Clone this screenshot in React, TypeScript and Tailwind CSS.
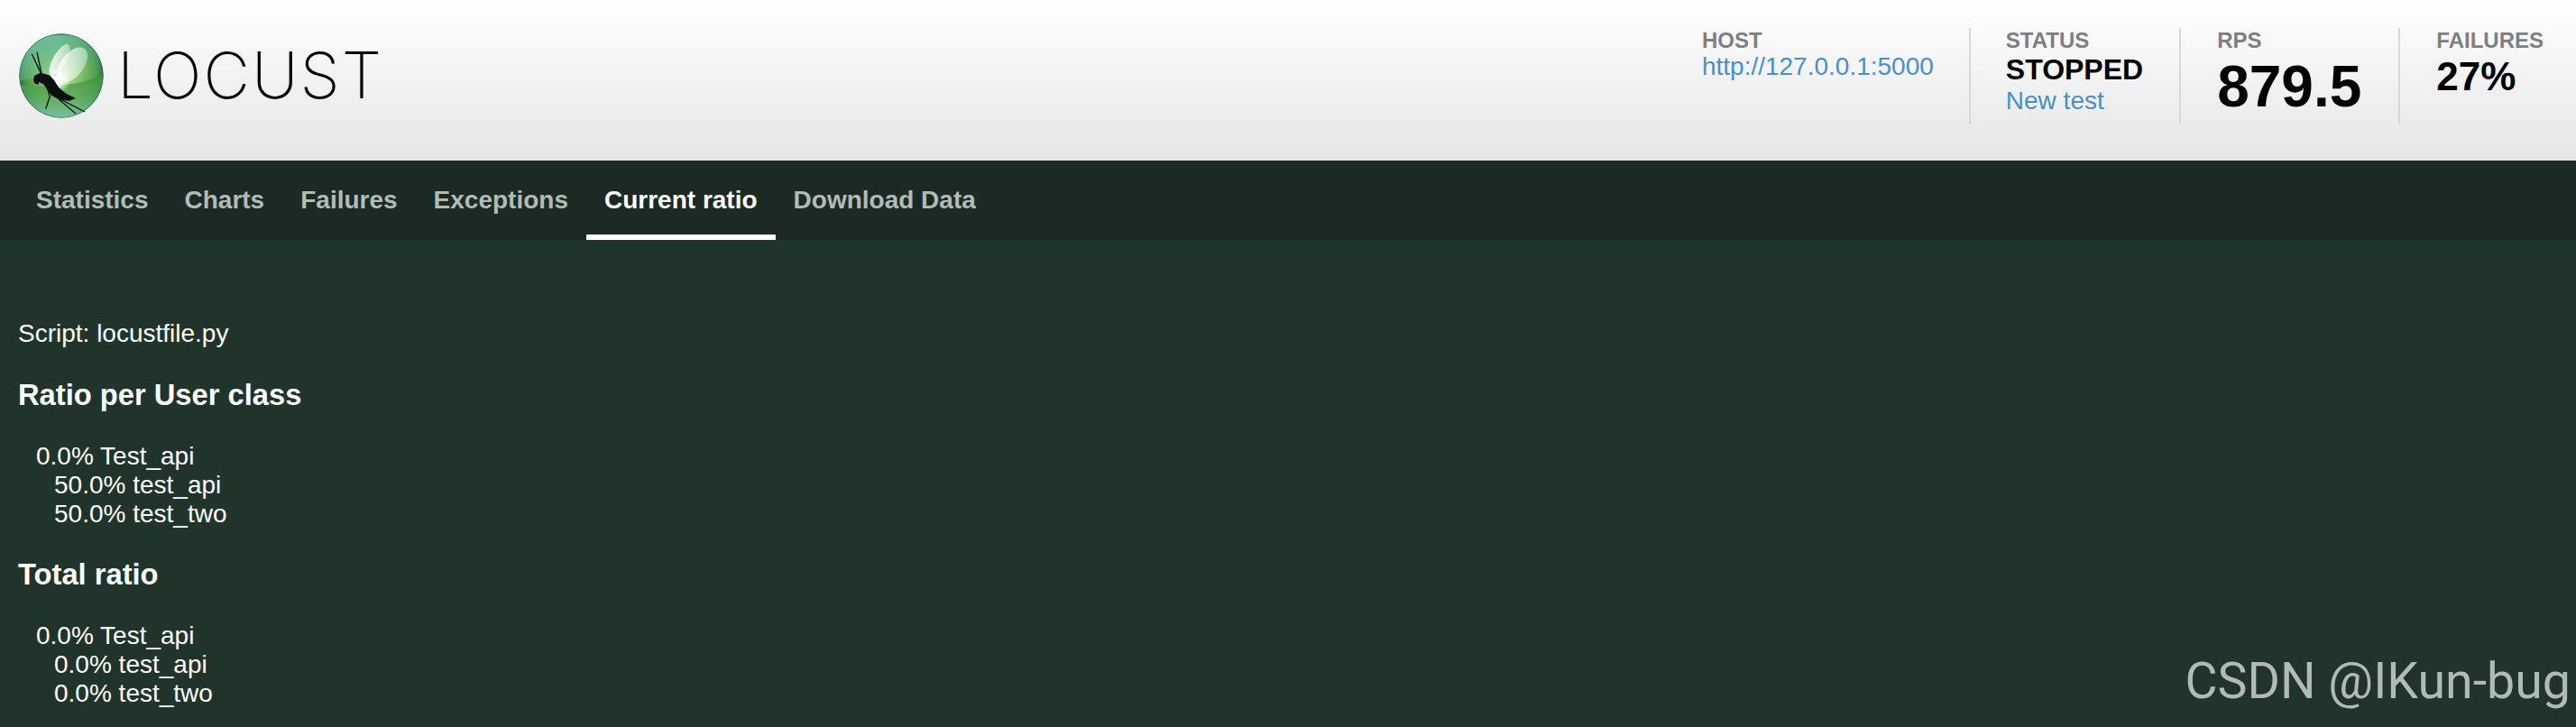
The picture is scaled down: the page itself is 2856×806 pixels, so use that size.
import React from "react"

const arial = "font-['Liberation_Sans',Arial,sans-serif]"

const LogoBall = () => (
    <svg width="94" height="94" viewBox="33 35 282 282" className="shrink-0">
        <defs>
            <radialGradient id="ball" cx="50%" cy="48%" r="54%">
                <stop offset="0%" stopColor="#c6e6a8" />
                <stop offset="45%" stopColor="#7fc06a" />
                <stop offset="78%" stopColor="#4c9a48" />
                <stop offset="100%" stopColor="#1f5f48" />
            </radialGradient>
            <linearGradient id="top" x1="0" y1="0" x2="0.7" y2="1">
                <stop offset="0%" stopColor="#7fcfc8" stopOpacity="0.95" />
                <stop offset="60%" stopColor="#6cc09a" stopOpacity="0.45" />
                <stop offset="100%" stopColor="#6cc09a" stopOpacity="0" />
            </linearGradient>
            <linearGradient id="bottom" x1="0" y1="0" x2="0" y2="1">
                <stop offset="0%" stopColor="#3f8f34" stopOpacity="0.9" />
                <stop offset="45%" stopColor="#58a858" stopOpacity="0.7" />
                <stop offset="100%" stopColor="#86cfae" stopOpacity="0.85" />
            </linearGradient>
            <radialGradient id="glow">
                <stop offset="0%" stopColor="#ffffff" />
                <stop offset="45%" stopColor="#ffffff" stopOpacity="0.75" />
                <stop offset="100%" stopColor="#ffffff" stopOpacity="0" />
            </radialGradient>
            <linearGradient id="wing" x1="1" y1="0" x2="0" y2="1">
                <stop offset="0%" stopColor="#ffffff" stopOpacity="0.3" />
                <stop offset="100%" stopColor="#ffffff" stopOpacity="0.95" />
            </linearGradient>
            <clipPath id="clip"><circle cx="174" cy="176" r="138" /></clipPath>
        </defs>
        <circle cx="174" cy="176" r="139" fill="url(#ball)" stroke="#174a3c" strokeWidth="2" />
        <g clipPath="url(#clip)">
            <path d="M35 40H315V190C260 170 120 170 35 195Z" fill="url(#top)" />
            <path d="M35 205C110 215 230 215 315 170V316H35Z" fill="url(#bottom)" />
        </g>
        <ellipse cx="210" cy="140" rx="38" ry="68" transform="rotate(38 210 140)" fill="url(#wing)" />
        <ellipse cx="168" cy="122" rx="21" ry="58" transform="rotate(30 168 122)" fill="url(#wing)" />
        <circle cx="160" cy="192" r="44" fill="url(#glow)" />
        <g stroke="#0c120f" fill="none" strokeWidth="4">
            <path d="M76 103L106 168" />
            <path d="M93 97L108 168" />
            <path d="M126 214L136 245L122 286" />
            <path d="M150 243L252 296" />
            <path d="M165 254L222 302" />
        </g>
        <path
            d="M81 192L84 176L104 166L134 174L150 191L166 216L190 235L222 251L202 259L170 256L141 241L116 206L100 196L97 206L85 201Z"
            fill="#0a0f0c"
        />
    </svg>
)

type StatProps = {
    label: string
    className: string
    children: React.ReactNode
}

const Stat: React.FC<StatProps> = ({ label, className, children }) => (
    <div className={`h-[106px] ${className}`}>
        <div className="text-[24px] leading-[27px] font-bold text-[#7f7f7f]">{label}</div>
        {children}
    </div>
)

const tabs = ["Statistics", "Charts", "Failures", "Exceptions", "Current ratio", "Download Data"]

const RatioList: React.FC<{ rows: string[] }> = ({ rows }) => (
    <div className="mt-[34px] pl-[20px] text-[28px] leading-[32px]">
        <div>{rows[0]}</div>
        <div className="pl-[20px]">{rows[1]}</div>
        <div className="pl-[20px]">{rows[2]}</div>
    </div>
)

export default function App() {
    return (
        <div className={`relative h-[806px] overflow-hidden bg-[#20342c] text-white ${arial}`}>
            <header className="flex items-center h-[178px] bg-gradient-to-b from-white to-[#e5e5e5]">
                <div className="flex items-center pl-[21px] gap-[15px] pb-[11px]">
                    <LogoBall />
                    <span className="font-['Inter',sans-serif] font-extralight text-[71px] leading-none text-black tracking-[2px]">LOCUST</span>
                </div>
                <div className="ml-auto flex pb-[10px]">
                    <Stat label="HOST" className="pl-[42px] pr-[39px] border-r-2 border-[#d8d8d8]">
                        <a className="block text-[28px] leading-[32px] text-[#4a8fc7]">http://127.0.0.1:5000</a>
                    </Stat>
                    <Stat label="STATUS" className="pl-[39px] pr-[40px] border-r-2 border-[#d8d8d8]">
                        <div className="mt-[1px] text-[32px] leading-[36px] font-bold text-black">STOPPED</div>
                        <a className="block text-[28px] leading-[32px] mt-[1px] text-[#4a8fc7]">New test</a>
                    </Stat>
                    <Stat label="RPS" className="pl-[40px] pr-[41px] border-r-2 border-[#d8d8d8]">
                        <div className="mt-[2px] text-[64px] leading-[72px] font-bold text-black">879.5</div>
                    </Stat>
                    <Stat label="FAILURES" className="pl-[40px] pr-[36px]">
                        <div className="mt-[2px] text-[44px] leading-[50px] font-bold text-black">27%</div>
                    </Stat>
                </div>
            </header>

            <nav className="flex h-[88px] pl-[20px] bg-[#1b2a24]">
                {tabs.map(tab => (
                    <a
                        key={tab}
                        className={`px-[20px] pt-[28px] text-[28px] leading-[32px] font-bold ${tab === "Current ratio" ? "text-white border-b-[6px] border-white" : "text-[#b1bcb6]"}`}
                    >
                        {tab}
                    </a>
                ))}
            </nav>

            <main className="pl-[20px] pt-[88px]">
                <div className="text-[28px] leading-[32px]">Script: locustfile.py</div>
                <h2 className="mt-[34px] text-[32.7px] leading-[36px] font-bold">Ratio per User class</h2>
                <RatioList rows={["0.0% Test_api", "50.0% test_api", "50.0% test_two"]} />
                <h2 className="mt-[33px] text-[32.7px] leading-[36px] font-bold">Total ratio</h2>
                <RatioList rows={["0.0% Test_api", "0.0% test_api", "0.0% test_two"]} />
            </main>

            <div className="absolute right-[6px] bottom-[19px] font-['Roboto',sans-serif] font-normal text-[55.5px] leading-[62px] text-[#b2bab6]">CSDN @IKun-bug</div>
        </div>
    )
}
